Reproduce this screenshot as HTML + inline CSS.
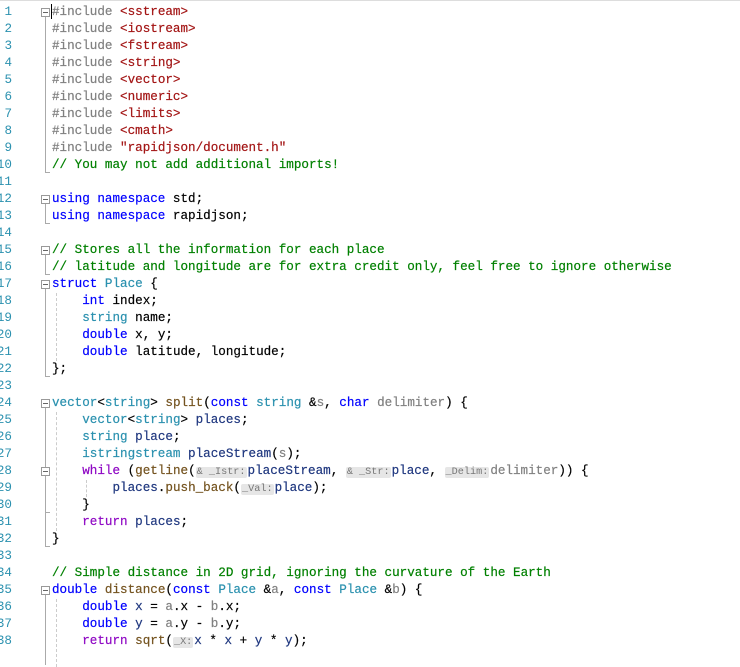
<!DOCTYPE html>
<html><head><meta charset="utf-8"><style>
body{margin:0;width:740px;height:649px;background:#fff;overflow:hidden;position:relative;font-family:"Liberation Mono",monospace;font-size:12.6px}
.ln{position:absolute;left:0;width:12px;text-align:right;color:#2b91af;height:17px;line-height:17px;overflow:hidden;white-space:nowrap;direction:rtl}
.c{position:absolute;left:52px;white-space:pre;height:17px;line-height:17px;color:#000;-webkit-text-stroke:0.2px}
.pp{color:#808080}.s{color:#a31515}.cm{color:#008000}.k{color:#0000ff}.t{color:#2b91af}.v{color:#1f377f}.f{color:#74531f}.ctl{color:#8f08c4}.p{color:#808080}
.h{background:#e6e6e6;color:#777;font-size:10.2px;border-radius:2px;padding:0 1px;margin-right:1px;-webkit-text-stroke:0}
.fb{position:absolute;left:41px;width:7px;height:7px;border:1px solid #999;background:#fff;box-sizing:content-box}
.fb:after{content:"";position:absolute;left:1px;right:1px;top:3px;height:1px;background:#666}
.vl{position:absolute;left:45px;width:1px;background:#aaa}
.tk{position:absolute;left:45px;width:5px;height:1px;background:#aaa}
.g{position:absolute;width:0;border-left:1px dashed #ccc}
</style></head><body>
<div style="position:absolute;left:0;top:0;width:740px;height:1px;background:#ddd"></div>
<div style="position:absolute;left:51px;top:4px;width:1px;height:15px;background:#000"></div>
<div id="w"></div>
<script>
var L=[
'<span class="pp">#include</span> <span class="s">&lt;sstream&gt;</span>',
'<span class="pp">#include</span> <span class="s">&lt;iostream&gt;</span>',
'<span class="pp">#include</span> <span class="s">&lt;fstream&gt;</span>',
'<span class="pp">#include</span> <span class="s">&lt;string&gt;</span>',
'<span class="pp">#include</span> <span class="s">&lt;vector&gt;</span>',
'<span class="pp">#include</span> <span class="s">&lt;numeric&gt;</span>',
'<span class="pp">#include</span> <span class="s">&lt;limits&gt;</span>',
'<span class="pp">#include</span> <span class="s">&lt;cmath&gt;</span>',
'<span class="pp">#include</span> <span class="s">"rapidjson/document.h"</span>',
'<span class="cm">// You may not add additional imports!</span>',
'',
'<span class="k">using namespace</span> std;',
'<span class="k">using namespace</span> rapidjson;',
'',
'<span class="cm">// Stores all the information for each place</span>',
'<span class="cm">// latitude and longitude are for extra credit only, feel free to ignore otherwise</span>',
'<span class="k">struct</span> <span class="t">Place</span> {',
'    <span class="k">int</span> index;',
'    <span class="t">string</span> name;',
'    <span class="k">double</span> x, y;',
'    <span class="k">double</span> latitude, longitude;',
'};',
'',
'<span class="t">vector</span>&lt;<span class="t">string</span>&gt; <span class="f">split</span>(<span class="k">const</span> <span class="t">string</span> &amp;<span class="p">s</span>, <span class="k">char</span> <span class="p">delimiter</span>) {',
'    <span class="t">vector</span>&lt;<span class="t">string</span>&gt; <span class="v">places</span>;',
'    <span class="t">string</span> <span class="v">place</span>;',
'    <span class="t">istringstream</span> <span class="v">placeStream</span>(<span class="p">s</span>);',
'    <span class="ctl">while</span> (<span class="f">getline</span>(<span class="h">&amp; _Istr:</span><span class="v">placeStream</span>, <span class="h">&amp; _Str:</span><span class="v">place</span>, <span class="h">_Delim:</span><span class="p">delimiter</span>)) {',
'        <span class="v">places</span>.<span class="f">push_back</span>(<span class="h">_Val:</span><span class="v">place</span>);',
'    }',
'    <span class="ctl">return</span> <span class="v">places</span>;',
'}',
'',
'<span class="cm">// Simple distance in 2D grid, ignoring the curvature of the Earth</span>',
'<span class="k">double</span> <span class="f">distance</span>(<span class="k">const</span> <span class="t">Place</span> &amp;<span class="p">a</span>, <span class="k">const</span> <span class="t">Place</span> &amp;<span class="p">b</span>) {',
'    <span class="k">double</span> <span class="v">x</span> = <span class="p">a</span>.x - <span class="p">b</span>.x;',
'    <span class="k">double</span> <span class="v">y</span> = <span class="p">a</span>.y - <span class="p">b</span>.y;',
'    <span class="ctl">return</span> <span class="f">sqrt</span>(<span class="h">_X:</span><span class="v">x</span> * <span class="v">x</span> + <span class="v">y</span> * <span class="v">y</span>);'
];
var h='';
function T(i){return 3.5+17*(i-1);}
for(var i=1;i<=38;i++){
 h+='<div class="ln" style="top:'+T(i)+'px">'+i+'</div>';
 h+='<div class="c" style="top:'+T(i)+'px">'+L[i-1]+'</div>';
}
var R=[[1,10],[12,13],[15,16],[17,22],[24,32],[28,30],[35,39]];
R.forEach(function(r){
 var a=r[0],b=r[1];
 var top=T(a)+13;
 h+='<div class="vl" style="top:'+top+'px;height:'+(T(b)+15-top)+'px"></div>';
 if(b<39)h+='<div class="tk" style="top:'+(T(b)+15)+'px"></div>';
});
R.forEach(function(r){h+='<div class="fb" style="top:'+(T(r[0])+4)+'px"></div>';});
[[18,21,56],[25,31,56],[29,29,86],[36,39,56]].forEach(function(g){
 h+='<div class="g" style="left:'+g[2]+'px;top:'+T(g[0])+'px;height:'+(17*(g[1]-g[0]+1))+'px"></div>';
});
document.getElementById('w').innerHTML=h;
</script>
</body></html>
